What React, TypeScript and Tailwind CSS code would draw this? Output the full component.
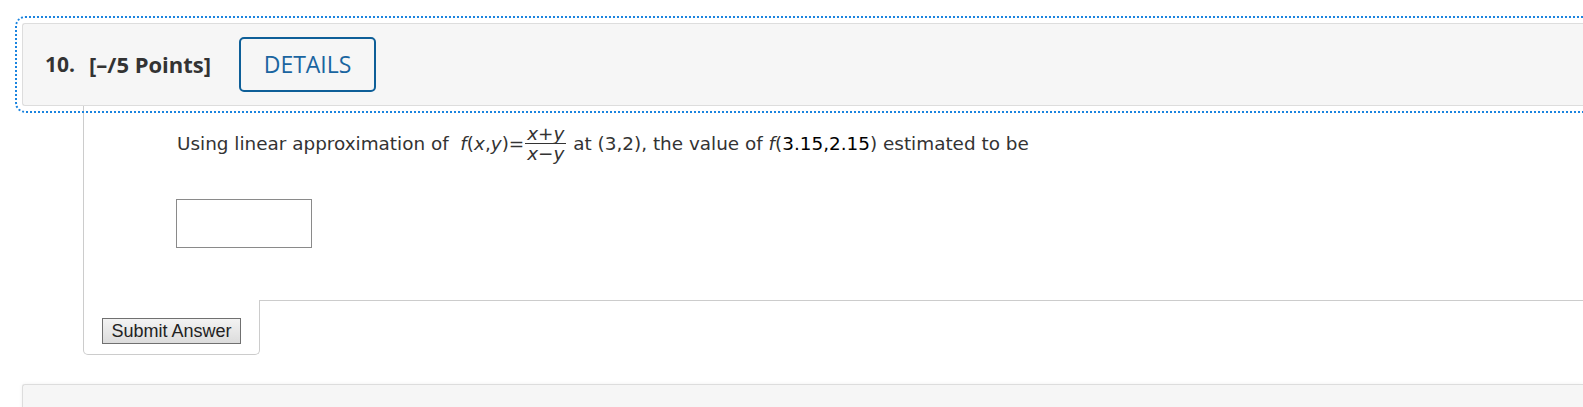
import React from "react";

export default function App() {
  return (
    <div className="w-full h-[407px] bg-white overflow-hidden">
      {/* Header */}
      <div className="pt-[23px] pl-[22px]">
        <div className="h-[83px] bg-[#f6f6f6] border border-r-0 border-[#dddddd] rounded-l-[3px] outline-2 outline-dotted outline-[#1b84df] outline-offset-[5px] flex items-center pl-[22px] font-['Open_Sans',sans-serif]">
          <span className="text-[21px] font-bold text-[#333333]">10.</span>
          <span className="ml-[14px] text-[22px] font-bold text-[#333333]">[–/5 Points]</span>
          <button className="ml-[28px] w-[137px] h-[55px] border-2 border-[#0e5f98] rounded-[5px] text-[23px] text-[#1a65a0] flex items-center justify-center">
            DETAILS
          </button>
        </div>
      </div>

      {/* Body */}
      <div className="ml-[83px] border-l border-[#cccccc] pt-[17px] pb-[52px]">
        <div className="pl-[93px] text-[18.4px] text-[#333333] flex items-center h-[42px] font-['DejaVu_Sans',Verdana,sans-serif]">
          <span className="whitespace-pre">Using linear approximation of  </span>
          <span className="italic">f</span>
          <span>(</span>
          <span className="italic">x</span>
          <span>,</span>
          <span className="italic">y</span>
          <span>)=</span>
          <span className="inline-flex flex-col items-center mx-[1px] leading-[19px] mt-[-2px]">
            <span className="italic px-[2px]">x+y</span>
            <span className="border-t border-[#333333] italic px-[2px] w-full text-center">x−y</span>
          </span>
          <span className="whitespace-pre"> at (3,2), the value of </span>
          <span className="italic">f</span>
          <span>(</span>
          <span className="text-black">3.15,2.15</span>
          <span>) estimated to be</span>
        </div>
        <div className="ml-[92px] mt-[34px] w-[136px] h-[49px] border border-[#8a8a8a] bg-white" />
      </div>

      {/* Submit row */}
      <div className="ml-[83px] flex">
        <div className="w-[177px] h-[55px] border-l border-b border-r border-[#cccccc] rounded-b-[5px] pt-[18px] pl-[18px]">
          <button className="w-[139px] h-[26px] border border-[#707070] bg-gradient-to-b from-[#f3f3f3] to-[#dcdcdc] text-[18px] text-[#222222] leading-none flex items-center justify-center font-['Liberation_Sans',Arial,sans-serif]">
            Submit Answer
          </button>
        </div>
        <div className="flex-1 border-t border-[#cccccc]" />
      </div>

      {/* Next panel */}
      <div className="mt-[29px] ml-[22px] h-[60px] bg-[#f6f6f6] border border-r-0 border-[#dddddd] rounded-tl-[3px] shadow-[0_0_4px_rgba(0,0,0,0.06)]" />
    </div>
  );
}
